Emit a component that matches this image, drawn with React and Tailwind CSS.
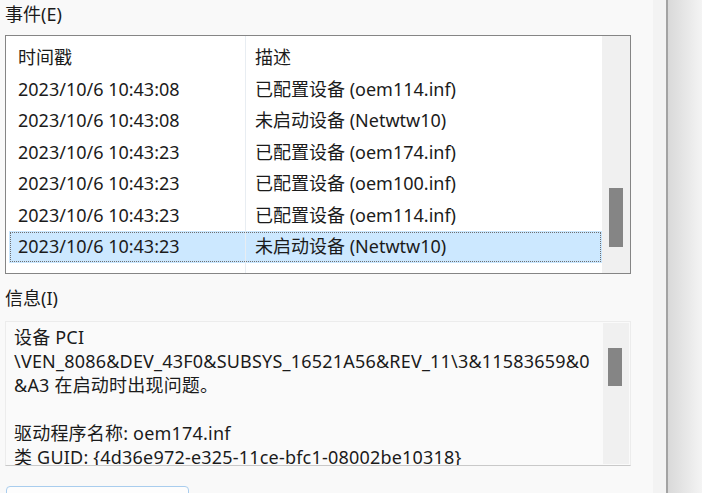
import React from "react";

const rows = [
  { time: "2023/10/6 10:43:08", desc: "已配置设备 (oem114.inf)" },
  { time: "2023/10/6 10:43:08", desc: "未启动设备 (Netwtw10)" },
  { time: "2023/10/6 10:43:23", desc: "已配置设备 (oem174.inf)" },
  { time: "2023/10/6 10:43:23", desc: "已配置设备 (oem100.inf)" },
  { time: "2023/10/6 10:43:23", desc: "已配置设备 (oem114.inf)" },
  { time: "2023/10/6 10:43:23", desc: "未启动设备 (Netwtw10)", selected: true },
];

const infoLines = [
  "设备 PCI",
  "\\VEN_8086&DEV_43F0&SUBSYS_16521A56&REV_11\\3&11583659&0",
  "&A3 在启动时出现问题。",
  "",
  "驱动程序名称: oem174.inf",
  "类 GUID: {4d36e972-e325-11ce-bfc1-08002be10318}",
];

const App = () => {
  return (
    <div
      className="w-[702px] h-[493px] overflow-hidden flex bg-[#f9f9f9] text-[#1b1b1b] text-[18px]"
      style={{ fontFamily: '"Noto Sans", "Noto Sans CJK SC", sans-serif' }}
    >
      {/* main dialog area */}
      <div className="w-[653px] h-full overflow-hidden flex flex-col">
        <div className="shrink-0 h-[35px] pl-[5px] pt-[1px] leading-[26px]">事件(E)</div>

        {/* event list */}
        <div className="shrink-0 ml-[5px] w-[626px] h-[239px] border border-[#858585] bg-white flex">
          <div className="relative w-[596px] h-full overflow-hidden">
            {/* column divider */}
            <div className="absolute left-[239px] top-0 bottom-0 w-px bg-[#e8edf2]"></div>

            <div className="h-[37.5px] ml-[3px] pt-[5px] flex items-center">
              <span className="w-[236px] pl-[9px]">时间戳</span>
              <span className="pl-[10px]">描述</span>
            </div>
            {rows.map((row, i) => (
              <div
                key={i}
                className={
                  row.selected
                    ? "h-[31.5px] ml-[3px] w-[593px] flex items-center bg-[#cce8ff] outline-1 outline-dotted outline-[#6f6f6f] -outline-offset-2"
                    : "h-[31.5px] ml-[3px] w-[593px] flex items-center"
                }
              >
                <span className="w-[236px] pl-[9px] whitespace-nowrap">{row.time}</span>
                <span className="pl-[10px] whitespace-nowrap">{row.desc}</span>
              </div>
            ))}
          </div>
          <div className="flex-1 bg-[#f0f0f0] pt-[152px] pl-[7px]">
            <div className="w-[14px] h-[59px] bg-[#858585]"></div>
          </div>
        </div>

        <div className="shrink-0 h-[47px] pl-[5px] pt-[11px] leading-[26px]">信息(I)</div>

        {/* info box */}
        <div className="shrink-0 ml-[5px] w-[626px] h-[145px] border border-[#ececec] border-b-[#c9c9c9] bg-[#fafafa] flex">
          <div className="w-[597px] h-full overflow-hidden pl-[8px] pt-[3px] leading-[24px] tracking-[0.2px]">
            {infoLines.map((line, i) => (
              <div key={i} className="h-[24px] whitespace-nowrap">
                {line}
              </div>
            ))}
          </div>
          <div className="my-[1px] w-[26px] bg-[#f0f0f0] pt-[25px] pl-[5px]">
            <div className="w-[14px] h-[38px] bg-[#858585]"></div>
          </div>
        </div>

        <div className="shrink-0 h-[20px]"></div>
        <div className="shrink-0 ml-[6px] w-[183px] h-[20px] border border-[#a9cdee] rounded-t-[4px] bg-[#fdfdfd]"></div>
      </div>

      {/* right edge */}
      <div className="w-[13px] bg-[#f3f3f3]"></div>
      <div className="w-[2px] bg-[#a3a3a3]"></div>
      <div className="flex-1 bg-gradient-to-r from-[#d9d9d9] to-[#f4f4f4]"></div>
    </div>
  );
};

export default App;
